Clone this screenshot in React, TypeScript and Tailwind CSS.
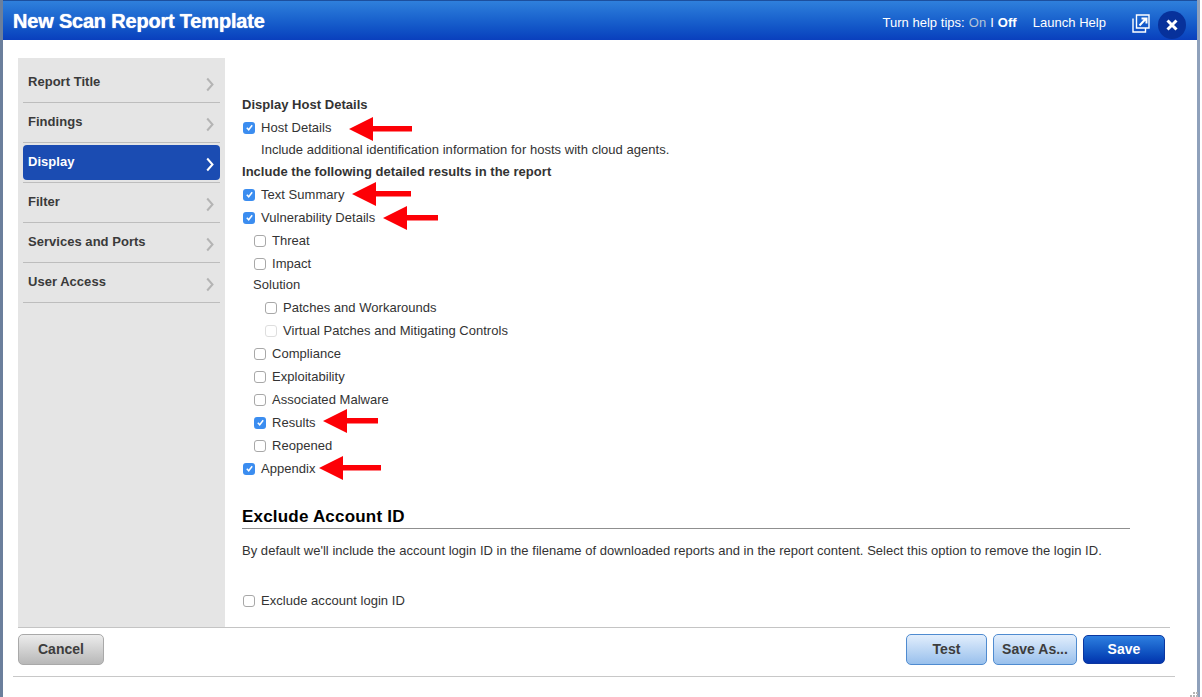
const navItems = ['Report Title', 'Findings', 'Display', 'Filter', 'Services and Ports', 'User Access']

function Chevron({ active }: { active: boolean }) {
  return (
    <svg width="8" height="15" viewBox="0 0 8 15" className="shrink-0 mt-[3px]">
      <path
        d="M1.2 1.5 L6.5 7.5 L1.2 13.5"
        fill="none"
        stroke={active ? '#ffffff' : '#b4b4b4'}
        strokeWidth="2"
      />
    </svg>
  )
}

function Arrow({ width, gap, shift = 0 }: { width: number; gap: number; shift?: number }) {
  return (
    <svg
      width={width}
      height="26"
      viewBox={`0 0 ${width} 26`}
      className="shrink-0 -my-2"
      style={{ marginLeft: gap, transform: `translateY(${shift}px)` }}
    >
      <path d={`M0 13 L24 1 L24 10 L${width} 10 L${width} 15.5 L24 15.5 L24 25 Z`} fill="#fd0006" />
    </svg>
  )
}

function Check({ checked, faded }: { checked?: boolean; faded?: boolean }) {
  if (checked) {
    return (
      <span className="flex w-3 h-3 shrink-0 items-center justify-center rounded-[3px] bg-[#3b8df0]">
        <svg width="9" height="9" viewBox="0 0 9 9">
          <path d="M1.8 4.8 L3.7 6.8 L7.2 2.2" fill="none" stroke="#ffffff" strokeWidth="1.5" />
        </svg>
      </span>
    )
  }
  return (
    <span
      className={`block w-3 h-3 shrink-0 rounded-[3px] border bg-white ${
        faded ? 'border-[#dedede]' : 'border-[#a8a8a8]'
      }`}
    />
  )
}

function Row({
  label,
  indent = 0,
  checked,
  faded,
  arrow,
  gap = 0,
  shift = 0,
}: {
  label: string
  indent?: number
  checked?: boolean
  faded?: boolean
  arrow?: number
  gap?: number
  shift?: number
}) {
  return (
    <div className="flex items-center h-[23px]" style={{ paddingLeft: indent + 1 }}>
      <Check checked={checked} faded={faded} />
      <span className="ml-[6px]">{label}</span>
      {arrow ? <Arrow width={arrow} gap={gap} shift={shift} /> : null}
    </div>
  )
}

export default function App() {
  return (
    <div className="relative flex w-[1202px] h-[697px] overflow-hidden bg-white text-[13px] tracking-[0.03px] text-[#333333] font-['Liberation_Sans',Arial,sans-serif]">
      <div className="w-[3px] shrink-0 bg-[#6b7f9c]" />

      <div className="flex flex-col w-[1194px] shrink-0">
        <div className="h-px bg-[#1c4f9e]" />
        {/* Header */}
        <div className="flex items-center h-[39px] pl-[10px] pr-[11px] bg-gradient-to-b from-[#2f80dc] to-[#0a3fbd] text-white">
          <h1 className="mt-px text-[20px] font-bold tracking-[-0.2px] [text-shadow:0_0_1px_#ffffff]">New Scan Report Template</h1>
          <div className="ml-auto mt-[8px] flex items-center text-[13px]">
            <div className="-mt-[4px] flex items-center">
              <span>Turn help tips:</span>
              <span className="ml-1 text-[#b5c4d8]">On</span>
              <span className="mx-1">I</span>
              <span className="font-bold">Off</span>
              <span className="ml-4">Launch Help</span>
            </div>
            <svg width="18" height="19" viewBox="0 0 18 19" className="ml-[26px] -mt-[3px]">
              <path d="M4.5 1 H17 V14 H4.5 Z" fill="none" stroke="#ffffff" strokeWidth="1.4" />
              <path d="M1 4.5 V18 H13.5 V14" fill="none" stroke="#ffffff" strokeWidth="1.4" />
              <path d="M7.5 11.5 L13.5 5 M9.5 4.5 H14.5 V9.5" fill="none" stroke="#ffffff" strokeWidth="2" />
            </svg>
            <span className="ml-[8px] flex w-7 h-7 items-center justify-center rounded-full bg-[#07319b]">
              <svg width="12" height="12" viewBox="0 0 12 12">
                <path d="M1.5 1.5 L10.5 10.5 M10.5 1.5 L1.5 10.5" stroke="#ffffff" strokeWidth="3" />
              </svg>
            </span>
          </div>
        </div>

        {/* Body */}
        <div className="flex h-[570px] mt-[18px] ml-[15px] w-[1152px] border-b border-[#c4c4c4]">
          <nav className="w-[207px] shrink-0 bg-[#e5e5e5] px-[5px] pt-[5px]">
            {navItems.map((item) => {
              const active = item === 'Display'
              return (
                <div key={item} className="h-[40px] border-b border-[#bdbdbd] pt-[2px]">
                  <div
                    className={`flex items-center justify-between h-[35px] pl-[5px] pr-[6px] rounded-[4px] font-bold ${
                      active ? 'bg-[#1b4cb2] text-white' : 'text-[#3a3a3a]'
                    }`}
                  >
                    <span className="-mt-[2px]">{item}</span>
                    <Chevron active={active} />
                  </div>
                </div>
              )
            })}
          </nav>

          <div className="flex-1 pl-[17px] pt-[35px]">
            <h3 className="font-bold leading-[23px]">Display Host Details</h3>
            <Row label="Host Details" checked arrow={63} gap={18} shift={1} />
            <p className="pl-[19px] leading-[22px]">Include additional identification information for hosts with cloud agents.</p>
            <h3 className="font-bold leading-[22px]">Include the following detailed results in the report</h3>
            <Row label="Text Summary" checked arrow={59} gap={8} shift={-1} />
            <Row label="Vulnerability Details" checked arrow={55} gap={8} />
            <Row label="Threat" indent={11} />
            <Row label="Impact" indent={11} />
            <p className="pl-[11px] pb-[2px] leading-[19px]">Solution</p>
            <Row label="Patches and Workarounds" indent={22} />
            <Row label="Virtual Patches and Mitigating Controls" indent={22} faded />
            <Row label="Compliance" indent={11} />
            <Row label="Exploitability" indent={11} />
            <Row label="Associated Malware" indent={11} />
            <Row label="Results" indent={11} checked arrow={55} gap={7} shift={-2} />
            <Row label="Reopened" indent={11} />
            <Row label="Appendix" checked arrow={62} gap={4} shift={-1} />

            <h2 className="mt-[26px] w-[888px] border-b border-[#8f8f8f] text-[17px] tracking-[0.2px] font-bold leading-[22px] text-black">
              Exclude Account ID
            </h2>
            <p className="mt-[14px] leading-[16px]">
              By default we'll include the account login ID in the filename of downloaded reports and in the report content. Select this option to remove the login ID.
            </p>
            <div className="mt-[30px]">
              <Row label="Exclude account login ID" />
            </div>
          </div>
        </div>

        {/* Footer */}
        <div className="flex items-start justify-between w-[1152px] ml-[15px] pt-[6px] pr-[5px] text-[14px]">
          <button className="w-[86px] h-[31px] rounded-[5px] border border-[#a9a9a9] bg-gradient-to-b from-[#ececec] to-[#b8b8b8] font-bold text-[#3d3d3d]">
            Cancel
          </button>
          <div className="flex gap-[6px]">
            <button className="w-[81px] h-[31px] rounded-[5px] border border-[#4f8bd0] bg-gradient-to-b from-[#e2eefc] to-[#99c0ec] font-bold text-[#3d3d3d]">
              Test
            </button>
            <button className="w-[84px] h-[31px] rounded-[5px] border border-[#4f8bd0] bg-gradient-to-b from-[#e2eefc] to-[#99c0ec] font-bold text-[#3d3d3d]">
              Save As...
            </button>
            <button className="w-[82px] h-[29px] mt-px rounded-[5px] border border-[#0b37a0] bg-gradient-to-b from-[#2e7fe0] to-[#0533ad] font-bold text-white">
              Save
            </button>
          </div>
        </div>
        <div className="mt-[11px] ml-[10px] w-[1162px] h-px bg-[#c8c8c8]" />
      </div>

      <div className="w-[3px] shrink-0 bg-[#8fa1bb]" />

      {/* resize grip */}
      <svg width="8" height="6" viewBox="0 0 8 6" className="absolute right-[4px] bottom-0">
        <path d="M0 4h2v2H0z M3 4h2v2H3z M6 4h2v2H6z M3 1h2v2H3z M6 1h2v2H6z" fill="#b5b5b5" />
      </svg>
    </div>
  )
}
